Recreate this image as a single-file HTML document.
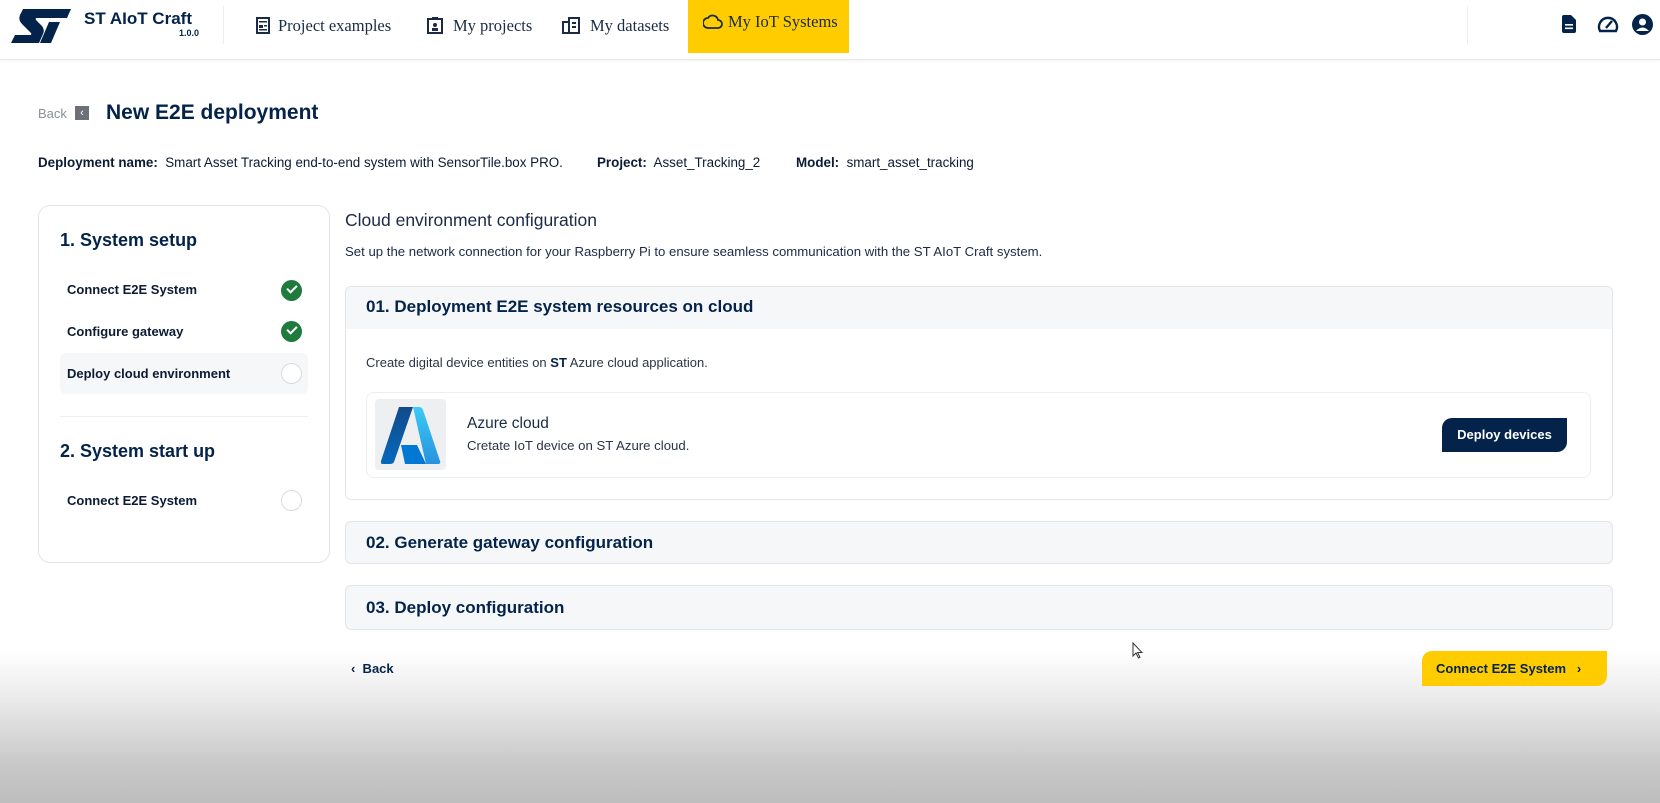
<!DOCTYPE html>
<html><head><meta charset="utf-8"><style>
*{box-sizing:border-box;margin:0;padding:0}
body{width:1660px;height:803px;overflow:hidden;background:#fff;font-family:"Liberation Sans",Arial,sans-serif;color:#03234b;position:relative}
.a{position:absolute;white-space:nowrap}
.hdr{position:absolute;left:0;top:0;width:1660px;height:60px;border-bottom:1px solid #e6e8ec;box-shadow:0 1px 3px rgba(0,0,0,.05)}
.nav{font-family:"Liberation Serif",serif;font-size:16.5px;color:#1b2a45;top:16px}
.ic{position:absolute}
.panel{position:absolute;left:38px;top:205px;width:292px;height:358px;border:1px solid #e3e5e8;border-radius:12px}
.item{font-size:13px;font-weight:bold;color:#0c1a33}
.chk{position:absolute;width:21px;height:21px;border-radius:50%;background:#1f7a3e}
.chk::after{content:"";position:absolute;left:6px;top:5px;width:8px;height:4px;border-left:2px solid #fff;border-bottom:2px solid #fff;transform:rotate(-45deg)}
.emp{position:absolute;width:21px;height:21px;border-radius:50%;border:1px solid #d6d9de;background:#fff}
.card{position:absolute;left:345px;width:1268px;border:1px solid #e3e5e8;border-radius:6px;background:#f6f7f8}
.ct{font-size:17px;font-weight:bold;color:#03234b}
</style></head><body>
<div class="hdr"></div>
<svg class="ic" style="left:11px;top:9px" width="60" height="34" viewBox="0 0 60 34"><path d="M12 0H60L56 9H26Q24 9 25 11L31 17Q34 21 32 25L28 34H0L4 26H19Q21 26 20 24L11 15Q7 11 9 6Z" fill="#03234b"/><path d="M38 13H49L40 34H29Z" fill="#03234b"/></svg>
<div class="a" style="left:84px;top:9px;font-size:17px;font-weight:bold;color:#03234b">ST AIoT Craft</div>
<div class="a" style="left:179px;top:28px;font-size:9px;font-weight:bold;color:#03234b">1.0.0</div>
<div class="a" style="left:223px;top:6px;width:1px;height:38px;background:#eceef0"></div>
<svg class="ic" style="left:256px;top:17px" width="14" height="17" viewBox="0 0 14 17"><rect x="1" y="1" width="12" height="15" fill="none" stroke="#1b2a45" stroke-width="2"/><rect x="3" y="4" width="8" height="1.5" fill="#1b2a45"/><rect x="3" y="8" width="4" height="3" fill="#1b2a45"/><rect x="8" y="8" width="3" height="1.5" fill="#1b2a45"/><rect x="3" y="12" width="8" height="1.5" fill="#1b2a45"/></svg>
<div class="a nav" style="left:278px">Project examples</div>
<svg class="ic" style="left:427px;top:17px" width="16" height="17" viewBox="0 0 16 17"><rect x="1" y="2" width="14" height="14" fill="none" stroke="#1b2a45" stroke-width="2"/><rect x="5" y="0" width="6" height="3" fill="#1b2a45"/><circle cx="8" cy="8" r="2" fill="#1b2a45"/><rect x="5" y="11" width="6" height="3" fill="#1b2a45"/></svg>
<div class="a nav" style="left:453px">My projects</div>
<svg class="ic" style="left:562px;top:17px" width="18" height="17" viewBox="0 0 18 17"><rect x="1" y="5" width="6" height="11" fill="none" stroke="#1b2a45" stroke-width="2"/><rect x="7" y="1" width="10" height="15" fill="none" stroke="#1b2a45" stroke-width="2"/><rect x="10" y="5" width="4" height="2" fill="#1b2a45"/><rect x="10" y="9" width="4" height="2" fill="#1b2a45"/></svg>
<div class="a nav" style="left:590px">My datasets</div>
<div class="a" style="left:688px;top:0;width:161px;height:53px;background:#ffcc00"></div>
<svg class="ic" style="left:703px;top:12px" width="20" height="18" viewBox="0 0 20 18"><path d="M5 16H15A4 4 0 0 0 15 8A5.5 5.5 0 0 0 5 6A5 5 0 0 0 5 16Z" fill="none" stroke="#1b2a45" stroke-width="1.8"/></svg>
<div class="a nav" style="left:728px;top:12px">My IoT Systems</div>
<div class="a" style="left:1467px;top:6px;width:1px;height:38px;background:#eceef0"></div>
<svg class="ic" style="left:1562px;top:15px" width="14" height="18" viewBox="0 0 14 18"><path d="M0 2Q0 0 2 0H9L14 5V16Q14 18 12 18H2Q0 18 0 16Z" fill="#03234b"/><rect x="3" y="9" width="8" height="1.6" fill="#fff"/><rect x="3" y="12.5" width="8" height="1.6" fill="#fff"/></svg>
<svg class="ic" style="left:1597px;top:15px" width="22" height="18" viewBox="0 0 22 18"><path d="M3 16A9 9 0 1 1 19 16Z" fill="none" stroke="#03234b" stroke-width="2.4"/><path d="M9 13L15 6" stroke="#03234b" stroke-width="2.4"/></svg>
<svg class="ic" style="left:1632px;top:14px" width="21" height="21" viewBox="0 0 21 21"><circle cx="10.5" cy="10.5" r="10.5" fill="#03234b"/><circle cx="10.5" cy="8" r="3.5" fill="#fff"/><path d="M4 17Q10.5 10 17 17" fill="#fff"/></svg>

<div class="a" style="left:38px;top:106px;font-size:13px;color:#8a8f98">Back</div>
<div class="a" style="left:75px;top:106px;width:14px;height:14px;background:#6d7078;color:#fff;font-size:11px;line-height:14px;text-align:center">‹</div>
<div class="a" style="left:106px;top:101px;font-size:21px;font-weight:bold;color:#03234b">New E2E deployment</div>
<div class="a" style="left:38px;top:155px;font-size:13.4px;color:#0c1a33"><b>Deployment name:</b>&nbsp; Smart Asset Tracking end-to-end system with SensorTile.box PRO.</div>
<div class="a" style="left:597px;top:155px;font-size:13.4px;color:#0c1a33"><b>Project:</b>&nbsp; Asset_Tracking_2</div>
<div class="a" style="left:796px;top:155px;font-size:13.4px;color:#0c1a33"><b>Model:</b>&nbsp; smart_asset_tracking</div>

<div class="panel"></div>
<div class="a" style="left:60px;top:230px;font-size:18px;font-weight:bold">1. System setup</div>
<div class="a item" style="left:67px;top:282px">Connect E2E System</div>
<div class="chk" style="left:281px;top:280px"></div>
<div class="a item" style="left:67px;top:324px">Configure gateway</div>
<div class="chk" style="left:281px;top:321px"></div>
<div class="a" style="left:60px;top:353px;width:248px;height:41px;background:#f6f7f8;border-radius:6px"></div>
<div class="a item" style="left:67px;top:366px">Deploy cloud environment</div>
<div class="emp" style="left:281px;top:363px"></div>
<div class="a" style="left:60px;top:416px;width:248px;height:1px;background:#eceef0"></div>
<div class="a" style="left:60px;top:441px;font-size:18px;font-weight:bold">2. System start up</div>
<div class="a item" style="left:67px;top:493px">Connect E2E System</div>
<div class="emp" style="left:281px;top:490px"></div>

<div class="a" style="left:345px;top:210px;font-size:17.5px;color:#1b2a45">Cloud environment configuration</div>
<div class="a" style="left:345px;top:244px;font-size:13.2px;color:#1b2a45">Set up the network connection for your Raspberry Pi to ensure seamless communication with the ST AIoT Craft system.</div>

<div class="card" style="top:286px;height:214px;background:#fff"><div style="height:42px;background:#f6f7f8;border-radius:6px 6px 0 0"></div></div>
<div class="a ct" style="left:366px;top:297px">01. Deployment E2E system resources on cloud</div>
<div class="a" style="left:366px;top:355px;font-size:13px;color:#2a3446">Create digital device entities on <b style="color:#03234b">ST</b> Azure cloud application.</div>
<div class="a" style="left:366px;top:392px;width:1225px;height:86px;border:1px solid #eceef0;border-radius:8px"></div>
<div class="a" style="left:375px;top:399px;width:71px;height:71px;background:#eeeff1;border-radius:4px"></div>
<svg class="ic" style="left:381px;top:407px" width="60" height="57" viewBox="0 0 60 57"><defs><linearGradient id="g1" x1="0" y1="0" x2="0" y2="1"><stop offset="0" stop-color="#114a8b"/><stop offset="1" stop-color="#0669bc"/></linearGradient><linearGradient id="g2" x1="0" y1="0" x2="0" y2="1"><stop offset="0" stop-color="#3ccbf4"/><stop offset="1" stop-color="#2892df"/></linearGradient></defs><path d="M18 0H32L13 55Q12 57 9 57H2Q-1 57 0 54Z" fill="url(#g1)"/><path d="M32 0H38Q41 0 42 3L59 54Q60 57 57 57H45Z" fill="url(#g2)"/><path d="M20 38H36L45 57H24Z" fill="#0078d4"/></svg>
<div class="a" style="left:467px;top:415px;font-size:15.5px;color:#1b2a45">Azure cloud</div>
<div class="a" style="left:467px;top:438px;font-size:13.2px;color:#2a3446">Cretate IoT device on ST Azure cloud.</div>
<div class="a" style="left:1442px;top:418px;width:125px;height:34px;background:#03234b;border-radius:10px 0 10px 0;color:#fff;font-size:13px;font-weight:bold;line-height:34px;text-align:center">Deploy devices</div>

<div class="card" style="top:521px;height:43px"></div>
<div class="a ct" style="left:366px;top:533px">02. Generate gateway configuration</div>
<div class="card" style="top:585px;height:45px"></div>
<div class="a ct" style="left:366px;top:598px">03. Deploy configuration</div>

<div class="a" style="left:0;top:650px;width:1660px;height:153px;background:linear-gradient(#fff,#ececec 30%,#c8c8c8 75%,#bdbdbd)"></div>
<div class="a" style="left:351px;top:661px;font-size:13px;font-weight:bold;color:#03234b">‹&nbsp; Back</div>
<div class="a" style="left:1422px;top:651px;width:185px;height:35px;background:#ffcc00;border-radius:10px 0 10px 0;color:#03234b;font-size:13px;font-weight:bold;line-height:35px;padding-left:14px">Connect E2E System &nbsp;&nbsp;›</div>
<svg class="ic" style="left:1132px;top:642px" width="11" height="17" viewBox="0 0 11 17"><path d="M1 1V14L4 11L6.5 16L8 15.3L5.6 10.5H10Z" fill="#fff" stroke="#333" stroke-width="1"/></svg>
</body></html>
